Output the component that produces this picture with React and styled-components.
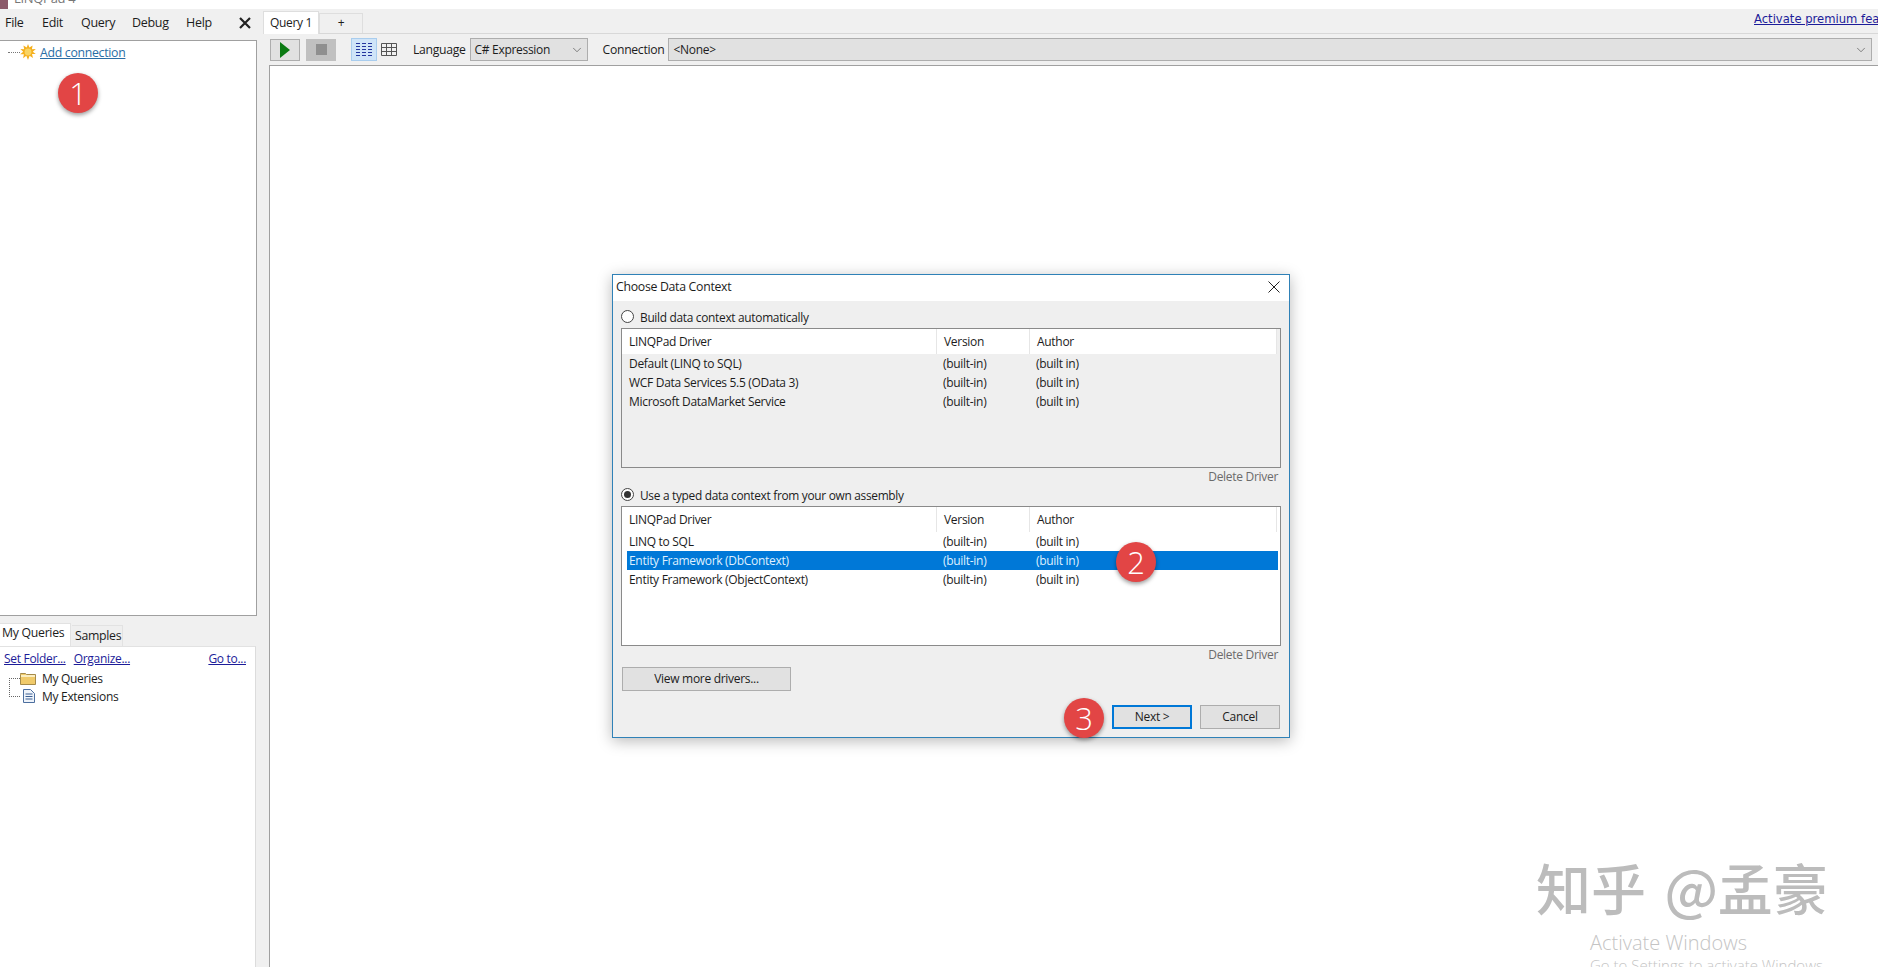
import React from 'react';
import styled, { createGlobalStyle } from 'styled-components';
import { ChevronDown } from 'lucide-react';

const GlobalStyle = createGlobalStyle`
  html, body {
    margin: 0;
    height: 967px;
    overflow: hidden;
    background: #ffffff;
  }
  body {
    font-family: "Open Sans", "Noto Sans", sans-serif;
    font-size: 12px;
    letter-spacing: -0.3px;
    color: #1c1c1c;
  }
  * { box-sizing: border-box; }
`;

const Page = styled.div`
  position: relative;
  width: 1878px;
  height: 967px;
  overflow: hidden;
  display: flex;
  flex-direction: column;
`;

const TitleStrip = styled.div`
  height: 9px;
  overflow: hidden;
  display: flex;
  gap: 5px;
  color: #777;
  font-size: 13px;
  line-height: 14px;
  flex: none;
  span { margin-top: -9px; }
`;

const Workspace = styled.div`
  flex: 1;
  min-height: 0;
  display: flex;
  background: #f0f0f0;
`;

const Sidebar = styled.aside`
  width: 263px;
  flex: none;
  display: flex;
  flex-direction: column;
`;

const MenuBar = styled.div`
  height: 31px;
  flex: none;
  display: flex;
  align-items: center;
  padding: 0 12px 4px 5px;
  font-size: 12.5px;
`;

const MenuItem = styled.span`
  width: ${(p) => p.$w}px;
`;

const CloseGlyph = styled.svg`
  margin-left: auto;
  width: 12px;
  height: 12px;
`;

const TreeBox = styled.div`
  width: 257px;
  height: 576px;
  flex: none;
  background: #fff;
  border: 1px solid #a0a0a0;
  border-left: none;
  padding: 2px 0 0 8px;
`;

const ConnectionRow = styled.div`
  display: flex;
  align-items: center;
  height: 18px;
`;

const DotLine = styled.span`
  width: 12px;
  border-top: 1px dotted #777;
`;

const AddLink = styled.a`
  margin-left: 4px;
  color: #2a6ea6;
  text-decoration: underline;
  font-size: 12.3px;
`;

const QueryTabs = styled.div`
  height: 30px;
  flex: none;
  display: flex;
  align-items: flex-end;
`;

const SideTab = styled.div`
  width: ${(p) => p.$w}px;
  height: ${(p) => (p.$active ? 23 : 21)}px;
  background: ${(p) => (p.$active ? '#fff' : '#efefef')};
  border: 1px solid #e2e2e2;
  border-bottom: none;
  border-left: none;
  padding-left: ${(p) => (p.$active ? 2 : 3)}px;
  line-height: ${(p) => (p.$active ? 18 : 19)}px;
  font-size: 12.3px;
  margin-left: ${(p) => (p.$active ? 0 : 1)}px;
`;

const QueriesPanel = styled.div`
  flex: 1;
  width: 256px;
  background: #fff;
  border-right: 1px solid #dcdcdc;
  border-top: 1px solid #e2e2e2;
`;

const LinkRow = styled.div`
  height: 22px;
  padding: 0 9px 0 4px;
  display: flex;
  align-items: center;
  gap: 8px;
`;

const NavyLink = styled.a`
  color: #1c1c99;
  text-decoration: underline;
  font-size: 12px;
  margin-left: ${(p) => (p.$push ? 'auto' : 0)};
`;

const FileTree = styled.div`
  position: relative;
  padding: 0 0 0 20px;
`;

const TreeConnector = styled.div`
  position: absolute;
  left: 9px;
  top: 9px;
  width: 11px;
  height: 19px;
  border-left: 1px dotted #666;
  border-top: 1px dotted #666;
  border-bottom: 1px dotted #666;
`;

const FileRow = styled.div`
  height: 18px;
  display: flex;
  align-items: center;
  gap: 6px;
  font-size: 12px;
`;

const Main = styled.main`
  flex: 1;
  min-width: 0;
  display: flex;
  flex-direction: column;
`;

const TabStrip = styled.div`
  height: 25px;
  flex: none;
  display: flex;
  align-items: flex-end;
  border-bottom: 1px solid #d8d8d8;
  padding-right: 0;
`;

const EditorTab = styled.div`
  width: ${(p) => p.$w}px;
  height: ${(p) => p.$h}px;
  margin-bottom: ${(p) => (p.$active ? -1 : 0)}px;
  padding-bottom: 2px;
  background: ${(p) => (p.$active ? '#fff' : '#f0f0f0')};
  border: 1px solid #dedede;
  border-bottom: none;
  display: flex;
  align-items: center;
  justify-content: center;
  font-size: 12px;
`;

const PremiumLink = styled.a`
  margin-left: auto;
  align-self: flex-start;
  margin-top: 3px;
  width: 124px;
  white-space: nowrap;
  font-family: "DejaVu Sans", Verdana, sans-serif;
  font-size: 11.6px;
  letter-spacing: 0;
  color: #1c1c99;
  text-decoration: underline;
`;

const Toolbar = styled.div`
  height: 31px;
  flex: none;
  display: flex;
  align-items: center;
  padding: 0 6px 0 7px;
`;

const RunButton = styled.div`
  width: 30px;
  height: 22px;
  margin-right: ${(p) => p.$gap}px;
  background: ${(p) => (p.$disabled ? '#c0c0c0' : '#e1e1e1')};
  border: 1px solid ${(p) => (p.$disabled ? '#c0c0c0' : '#adadad')};
  display: flex;
  align-items: center;
  justify-content: center;
`;

const ViewToggle = styled.div`
  width: ${(p) => p.$w}px;
  height: 23px;
  display: flex;
  align-items: center;
  justify-content: center;
  background: ${(p) => (p.$on ? '#cfe4f8' : 'transparent')};
  border: 1px solid ${(p) => (p.$on ? '#a9cdee' : 'transparent')};
  margin-right: ${(p) => p.$gap || 0}px;
`;

const FieldLabel = styled.span`
  margin-right: 4px;
  font-size: 12.2px;
`;

const Select = styled.div`
  width: ${(p) => (p.$w ? `${p.$w}px` : 'auto')};
  flex: ${(p) => (p.$w ? 'none' : 1)};
  height: 23px;
  margin-right: ${(p) => p.$gap || 0}px;
  background: #e1e1e1;
  border: 1px solid #adadad;
  display: flex;
  align-items: center;
  justify-content: space-between;
  padding: 0 3px 0 4px;
  font-size: 12px;
  svg { color: #555; }
`;

const Editor = styled.div`
  flex: 1;
  margin-left: 6px;
  background: #fff;
  border: 1px solid #a0a0a0;
  border-right: none;
  border-bottom: none;
`;

const Dialog = styled.section`
  position: absolute;
  left: 612px;
  top: 274px;
  width: 678px;
  height: 464px;
  display: flex;
  flex-direction: column;
  background: #efefef;
  border: 1px solid #2f81b7;
  box-shadow: 0 3px 14px rgba(0, 0, 0, 0.28);
`;

const DialogTitle = styled.header`
  height: 26px;
  flex: none;
  background: #fff;
  display: flex;
  align-items: center;
  justify-content: space-between;
  padding: 0 9px 3px 3px;
  font-size: 12.3px;
`;

const DialogBody = styled.div`
  flex: 1;
  padding: 6px 8px 0 8px;
  display: flex;
  flex-direction: column;
`;

const RadioRow = styled.label`
  height: 19px;
  flex: none;
  margin-bottom: 2px;
  display: flex;
  align-items: center;
  gap: 6px;
  font-size: 11.9px;
`;

const RadioDot = styled.span`
  width: 13px;
  height: 13px;
  border-radius: 50%;
  border: 1px solid #444;
  background: #fff;
  display: flex;
  align-items: center;
  justify-content: center;
  &::after {
    content: '';
    display: ${(p) => (p.$checked ? 'block' : 'none')};
    width: 7px;
    height: 7px;
    border-radius: 50%;
    background: #333;
  }
`;

const DriverList = styled.div`
  height: 140px;
  flex: none;
  background: ${(p) => (p.$muted ? '#efefef' : '#fff')};
  border: 1px solid #8a8a8a;
  font-size: 12px;
`;

const ListHeader = styled.div`
  height: 25px;
  margin-right: 3px;
  background: #fff;
  display: grid;
  grid-template-columns: 315px 93px 1fr;
  align-items: stretch;
`;

const HeaderCell = styled.div`
  padding-left: 7px;
  display: flex;
  align-items: center;
  border-right: 1px solid #e6e6e6;
`;

const ListRow = styled.div`
  height: 19px;
  margin: 0 2px 0 5px;
  padding-left: 2px;
  display: grid;
  grid-template-columns: 314px 93px 1fr;
  align-items: center;
  background: ${(p) => (p.$selected ? '#0078d7' : 'transparent')};
  color: ${(p) => (p.$selected ? '#dff0ff' : 'inherit')};
`;

const DeleteDriver = styled.div`
  height: 17px;
  flex: none;
  padding-right: 3px;
  display: flex;
  align-items: center;
  justify-content: flex-end;
  color: #6b6b6b;
  font-size: 12px;
`;

const Button = styled.button`
  width: ${(p) => p.$w}px;
  height: 24px;
  background: #e1e1e1;
  border: ${(p) => (p.$primary ? '2px solid #0078d7' : '1px solid #adadad')};
  color: #1c1c1c;
  font-family: inherit;
  font-size: 12px;
  letter-spacing: inherit;
  padding: 0 0 2px;
`;

const MoreRow = styled.div`
  margin: 4px 0 0 1px;
  flex: none;
`;

const DialogFooter = styled.div`
  margin-top: 14px;
  padding-right: 1px;
  display: flex;
  justify-content: flex-end;
  gap: 8px;
`;

const Badge = styled.div`
  position: absolute;
  left: ${(p) => p.$x - 20}px;
  top: ${(p) => p.$y - 20}px;
  width: 40px;
  height: 40px;
  border-radius: 50%;
  background: #e24545;
  box-shadow: 0 2px 4px rgba(0, 0, 0, 0.4);
  color: #fff;
  display: flex;
  align-items: center;
  justify-content: center;
  font-size: 31px;
  font-weight: 300;
  letter-spacing: 0;
  font-family: "Open Sans", sans-serif;
`;

const Watermark = styled.div`
  position: absolute;
  left: 1536px;
  top: 847px;
  font-family: "Noto Sans CJK SC", sans-serif;
  font-size: 55px;
  font-weight: 500;
  word-spacing: 6px;
  letter-spacing: 0;
  line-height: 78px;
  color: #bcbcbc;
  white-space: nowrap;
`;

const ActivationNote = styled.div`
  position: absolute;
  left: 1590px;
  top: 930px;
  color: #c4c4c4;
  font-weight: 300;
  letter-spacing: 0;
  white-space: nowrap;
  div:first-child { font-size: 20px; line-height: 26px; }
  div:last-child { font-size: 15px; line-height: 19px; }
`;

function SunIcon() {
  return (
    <svg width="16" height="16" viewBox="0 0 16 16">
      <path
        d="M8 0l1.400 3.600L12.600 1.600l-.7 3.700 3.900-.2-3 2.600 3 2.200-3.800.2 1 3.800-3.400-2.200L8 16l-1.700-4.200-3.200 2.400.8-3.900-3.700-.1 3-2.500L.4 5l3.800.2-.8-3.700 3.300 2.100z"
        fill="#f5b01e"
      />
      <circle cx="8" cy="8" r="3.400" fill="#f9d463" />
    </svg>
  );
}

function FolderIcon() {
  return (
    <svg width="16" height="13" viewBox="0 0 16 13">
      <path d="M.5 2.500V1.500h5l1 1h9v10H.5z" fill="#f0ca6a" stroke="#a58a4a" />
      <rect x="1" y="3" width="14" height="2" fill="#fbeec2" />
    </svg>
  );
}

function DocIcon() {
  return (
    <svg width="12" height="14" viewBox="0 0 12 14" style={{ marginLeft: 3, marginRight: 1 }}>
      <path d="M.5.500h7l4 4v9H.5z" fill="#eef3fa" stroke="#4c6f9f" />
      <path d="M2.500 5h7M2.500 7.500h7M2.500 10h7" stroke="#3b5f92" />
    </svg>
  );
}

function ListViewIcon() {
  return (
    <svg width="16" height="15" viewBox="0 0 16 15">
      <path
        d="M0 1.500h4M6 1.500h4M12 1.500h4M0 4.500h4M6 4.500h4M12 4.500h4M0 7.500h4M6 7.500h4M12 7.500h4M0 10.500h4M6 10.500h4M12 10.500h4M0 13.500h4M6 13.500h4M12 13.500h4"
        stroke="#24369e"
      />
    </svg>
  );
}

function TableViewIcon() {
  return (
    <svg width="16" height="13" viewBox="0 0 16 13">
      <path d="M.5.500h15v12H.5zM.5 4.500h15M.5 8.500h15M5.500.500v12M10.500.500v12" fill="none" stroke="#555" />
    </svg>
  );
}

const autoDrivers = ['Default (LINQ to SQL)', 'WCF Data Services 5.5 (OData 3)', 'Microsoft DataMarket Service'];
const typedDrivers = ['LINQ to SQL', 'Entity Framework (DbContext)', 'Entity Framework (ObjectContext)'];

function Drivers({ names, selected, muted }) {
  return (
    <DriverList $muted={muted}>
      <ListHeader>
        <HeaderCell>LINQPad Driver</HeaderCell>
        <HeaderCell>Version</HeaderCell>
        <HeaderCell>Author</HeaderCell>
      </ListHeader>
      {names.map((name) => (
        <ListRow key={name} $selected={name === selected}>
          <span>{name}</span>
          <span>(built-in)</span>
          <span>(built in)</span>
        </ListRow>
      ))}
    </DriverList>
  );
}

export default function App() {
  return (
    <Page>
      <GlobalStyle />
      <TitleStrip>
        <svg width="9" height="9" viewBox="0 0 9 9">
          <rect width="8" height="9" fill="#8c5a6a" />
        </svg>
        <span>LINQPad 4</span>
      </TitleStrip>

      <Workspace>
        <Sidebar>
          <MenuBar>
            <MenuItem $w={37}>File</MenuItem>
            <MenuItem $w={39}>Edit</MenuItem>
            <MenuItem $w={51}>Query</MenuItem>
            <MenuItem $w={54}>Debug</MenuItem>
            <MenuItem $w={40}>Help</MenuItem>
            <CloseGlyph viewBox="0 0 12 12">
              <path d="M1 1l10 10M11 1L1 11" stroke="#222" strokeWidth="2.2" />
            </CloseGlyph>
          </MenuBar>
          <TreeBox>
            <ConnectionRow>
              <DotLine />
              <SunIcon />
              <AddLink>Add connection</AddLink>
            </ConnectionRow>
          </TreeBox>
          <QueryTabs>
            <SideTab $active $w={71}>My Queries</SideTab>
            <SideTab $w={51}>Samples</SideTab>
          </QueryTabs>
          <QueriesPanel>
            <LinkRow>
              <NavyLink>Set Folder...</NavyLink>
              <NavyLink>Organize...</NavyLink>
              <NavyLink $push>Go to...</NavyLink>
            </LinkRow>
            <FileTree>
              <TreeConnector />
              <FileRow><FolderIcon />My Queries</FileRow>
              <FileRow><DocIcon />My Extensions</FileRow>
            </FileTree>
          </QueriesPanel>
        </Sidebar>

        <Main>
          <TabStrip>
            <EditorTab $active $w={56} $h={23}>Query 1</EditorTab>
            <EditorTab $w={44} $h={20}>+</EditorTab>
            <PremiumLink>Activate premium features</PremiumLink>
          </TabStrip>
          <Toolbar>
            <RunButton $gap={6}>
              <svg width="10" height="16" viewBox="0 0 10 16">
                <path d="M0 0l10 8-10 8z" fill="#0b7a12" />
              </svg>
            </RunButton>
            <RunButton $disabled $gap={15}>
              <svg width="11" height="11" viewBox="0 0 11 11">
                <rect width="11" height="11" fill="#8f8f8f" />
              </svg>
            </RunButton>
            <ViewToggle $on $w={26}><ListViewIcon /></ViewToggle>
            <ViewToggle $w={24} $gap={12}><TableViewIcon /></ViewToggle>
            <FieldLabel>Language</FieldLabel>
            <Select $w={118} $gap={15}>
              C# Expression
              <ChevronDown size={14} strokeWidth={1.2} />
            </Select>
            <FieldLabel>Connection</FieldLabel>
            <Select>
              {'<None>'}
              <ChevronDown size={14} strokeWidth={1.2} />
            </Select>
          </Toolbar>
          <Editor />
        </Main>
      </Workspace>

      <Dialog>
        <DialogTitle>
          Choose Data Context
          <svg width="12" height="12" viewBox="0 0 12 12">
            <path d="M.5.500l11 11M11.500.500l-11 11" stroke="#222" />
          </svg>
        </DialogTitle>
        <DialogBody>
          <RadioRow><RadioDot />Build data context automatically</RadioRow>
          <Drivers names={autoDrivers} muted />
          <DeleteDriver>Delete Driver</DeleteDriver>
          <RadioRow><RadioDot $checked />Use a typed data context from your own assembly</RadioRow>
          <Drivers names={typedDrivers} selected="Entity Framework (DbContext)" />
          <DeleteDriver>Delete Driver</DeleteDriver>
          <MoreRow><Button $w={169}>View more drivers...</Button></MoreRow>
          <DialogFooter>
            <Button $primary $w={80}>Next &gt;</Button>
            <Button $w={80}>Cancel</Button>
          </DialogFooter>
        </DialogBody>
      </Dialog>

      <Badge $x={78} $y={93}>1</Badge>
      <Badge $x={1136} $y={562}>2</Badge>
      <Badge $x={1084} $y={718}>3</Badge>

      <Watermark>知乎 @孟豪</Watermark>
      <ActivationNote>
        <div>Activate Windows</div>
        <div>Go to Settings to activate Windows.</div>
      </ActivationNote>
    </Page>
  );
}
